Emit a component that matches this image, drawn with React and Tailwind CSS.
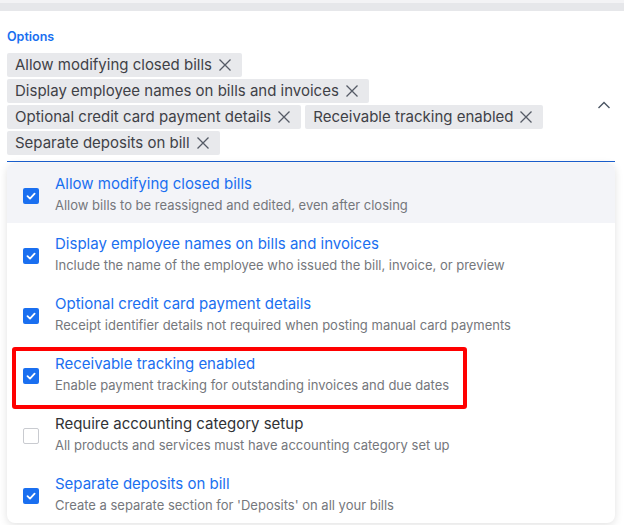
import React from "react";

const chips = [
  "Allow modifying closed bills",
  "Display employee names on bills and invoices",
  "Optional credit card payment details",
  "Receivable tracking enabled",
  "Separate deposits on bill",
];

const items = [
  { t: "Allow modifying closed bills", d: "Allow bills to be reassigned and edited, even after closing", c: true, hl: true },
  { t: "Display employee names on bills and invoices", d: "Include the name of the employee who issued the bill, invoice, or preview", c: true },
  { t: "Optional credit card payment details", d: "Receipt identifier details not required when posting manual card payments", c: true },
  { t: "Receivable tracking enabled", d: "Enable payment tracking for outstanding invoices and due dates", c: true },
  { t: "Require accounting category setup", d: "All products and services must have accounting category set up", c: false },
  { t: "Separate deposits on bill", d: "Create a separate section for 'Deposits' on all your bills", c: true },
];

function X() {
  return (
    <svg width="14" height="14" viewBox="0 0 14 14" className="ml-[6px] shrink-0">
      <path d="M1.5 1.5 L12.5 12.5 M12.5 1.5 L1.5 12.5" stroke="#555b66" strokeWidth="1.3" fill="none" />
    </svg>
  );
}

function Check({ on }) {
  if (!on)
    return <div className="mt-[25px] w-4 h-4 rounded-[2px] border border-[#c9cbd0] bg-white shrink-0" />;
  return (
    <div className="mt-[25px] w-4 h-4 rounded-[2px] bg-[#1a6ff0] shrink-0 flex items-center justify-center">
      <svg width="12" height="12" viewBox="0 0 12 12">
        <path d="M2.5 6.2 L5 8.6 L9.6 3.6" stroke="white" strokeWidth="1.8" fill="none" strokeLinecap="round" strokeLinejoin="round" />
      </svg>
    </div>
  );
}

export default function App() {
  return (
    <div className="w-[624px] h-[525px] bg-white overflow-hidden relative" style={{ fontFamily: "Inter, 'Noto Sans', sans-serif" }}>
      <div className="h-[3px] bg-[#f3f3f5]" />
      <div className="h-[8px] bg-[#e6e7ea]" />
      <div className="pl-[7px] pr-[9px]">
        <div className="pt-[18px] text-[12.5px] font-semibold text-[#1a6ff0] leading-[16px]">Options</div>
        <div className="mt-[8px] flex items-center border-b border-[#1a5fd0] pb-[6px]">
          <div className="flex-1 flex flex-wrap gap-x-1 gap-y-[2px]">
            {chips.map((c) => (
              <div key={c} className="h-6 pl-2 pr-[10px] bg-[#e8e9ec] rounded-[2px] flex items-center text-[15px] text-[#3f4147]">
                <span>{c}</span>
                <X />
              </div>
            ))}
          </div>
          <svg width="14" height="10" viewBox="0 0 14 10" className="mr-[4px] mt-[2px]">
            <path d="M1.5 8 L7 2.5 L12.5 8" stroke="#4b5563" strokeWidth="1.4" fill="none" />
          </svg>
        </div>
        <div className="mt-[1px] rounded-[8px] bg-white shadow-[0_2px_8px_rgba(0,0,0,0.12)] overflow-hidden">
          {items.map((it) => (
            <div key={it.t} className={`h-[60px] flex items-start pl-4 ${it.hl ? "bg-[#f3f4f8]" : ""}`}>
              <Check on={it.c} />
              <div className="ml-4 pt-[11px] flex flex-col">
                <div className={`text-[15px] leading-[20px] ${it.c ? "text-[#1a6ff0]" : "text-[#303236]"}`}>{it.t}</div>
                <div className="text-[13px] leading-[18px] text-[#75777c] mt-[2px]">{it.d}</div>
              </div>
            </div>
          ))}
        </div>
      </div>
      <div className="absolute left-[12px] top-[347px] w-[455px] h-[62px] border-[4px] border-[#ff0000] rounded-[3px]" />
    </div>
  );
}
